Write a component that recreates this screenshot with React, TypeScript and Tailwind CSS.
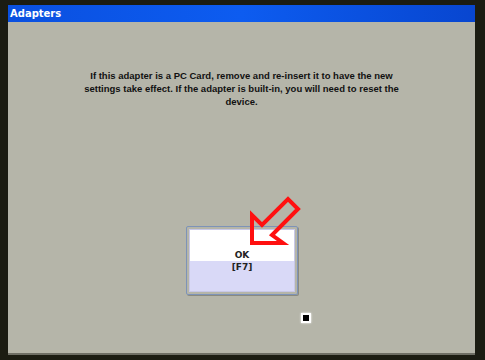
export default function App() {
  return (
    <div className="relative h-[360px] w-[485px] bg-[#1b1c12] pt-[5px] pl-[8px]" style={{ fontFamily: "Tahoma, 'DejaVu Sans', sans-serif" }}>
      <div className="flex h-[350px] w-[467px] flex-col border-b-2 border-[#6e6e64] bg-[#b5b5a9]">
        <div className="flex h-[17px] items-center bg-gradient-to-r from-[#0a50e0] via-[#0d5cf0] to-[#0846d0] px-[2px]">
          <span className="text-[10px] font-bold text-white" style={{ fontFamily: "'DejaVu Sans', sans-serif" }}>Adapters</span>
        </div>
        <div className="flex-1">
          <p
            className="mx-auto mt-[47px] w-[330px] text-center text-[9.5px] font-bold leading-[13px] text-[#111]"
            style={{ fontFamily: "'Liberation Sans', Arial, sans-serif" }}
          >
            If this adapter is a PC Card, remove and re-insert it to have the new settings take effect. If the adapter is built-in, you will need to reset the device.
          </p>
          <div className="ml-[178px] mt-[118px] flex h-[69px] w-[112px] flex-col rounded-[2px] border border-[#7d93b8] p-[2px] shadow-[1px_1px_0_#8a8a80]">
            <div className="flex flex-1 flex-col border border-[#c8c8e8]">
              <div className="flex h-[31px] items-end justify-center bg-white">
                <span className="text-[9px] font-bold leading-[11px] text-[#222]" style={{ fontFamily: "'DejaVu Sans', sans-serif" }}>OK</span>
              </div>
              <div className="flex flex-1 justify-center bg-[#d9d9f7]">
                <span className="text-[9px] font-bold leading-[12px] text-[#222]" style={{ fontFamily: "'DejaVu Sans', sans-serif" }}>[F7]</span>
              </div>
            </div>
          </div>
        </div>
      </div>
      <svg className="absolute left-[236px] top-[190px]" width="70" height="60" viewBox="236 190 70 60">
        <polygon
          points="252,243 252,215 262,225 288,199 298,209 272,235 283,243"
          fill="none"
          stroke="#ff1010"
          strokeWidth="4"
          strokeLinejoin="miter"
        />
      </svg>
      <div className="absolute left-[301px] top-[313px] flex h-[10px] w-[10px] items-center justify-center bg-white shadow-[0_0_2px_#fff]">
        <div className="h-[6px] w-[6px] bg-black" />
      </div>
    </div>
  );
}
